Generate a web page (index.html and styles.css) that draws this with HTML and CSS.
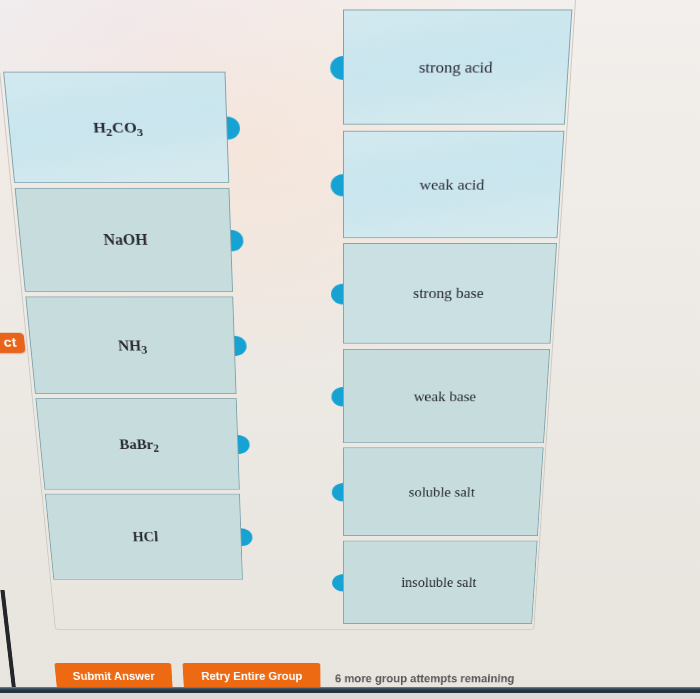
FILE: index.html
```html
<!DOCTYPE html>
<html lang="en">
<head>
    <meta charset="UTF-8">
    <meta name="viewport" content="width=device-width, initial-scale=1.0">
    <title>Classify the Compounds</title>
    <link rel="stylesheet" href="styles.css">
</head>
<body>
    <div class="screen">
        <div class="stage">
            <div class="side">
                <div class="tab">ct</div>
                <div class="edge"></div>
            </div>
            <div class="main">
                <div class="panel">
                    <div class="col items">
                        <div class="card item"><span class="label">H<sub>2</sub>CO<sub>3</sub></span></div>
                        <div class="card item"><span class="label">NaOH</span></div>
                        <div class="card item"><span class="label">NH<sub>3</sub></span></div>
                        <div class="card item"><span class="label">BaBr<sub>2</sub></span></div>
                        <div class="card item"><span class="label">HCl</span></div>
                    </div>
                    <div class="col targets">
                        <div class="card target"><span class="label">strong acid</span></div>
                        <div class="card target"><span class="label">weak acid</span></div>
                        <div class="card target"><span class="label">strong base</span></div>
                        <div class="card target"><span class="label">weak base</span></div>
                        <div class="card target"><span class="label">soluble salt</span></div>
                        <div class="card target"><span class="label">insoluble salt</span></div>
                    </div>
                </div>
                <div class="actions">
                    <button class="btn"><span class="label">Submit Answer</span></button>
                    <button class="btn btn-wide"><span class="label">Retry Entire Group</span></button>
                    <span class="attempts label">6 more group attempts remaining</span>
                </div>
            </div>
        </div>
    </div>
    <div class="bezel"></div>
    <div class="desk"></div>
</body>
</html>
```

FILE: styles.css
```css
html, body {
    margin: 0;
    padding: 0;
    overflow: hidden;
    background: #dcdcdc;
}
.screen {
    height: 687px;
    overflow: hidden;
    background:
        radial-gradient(ellipse 300px 220px at 250px 150px, rgba(255, 218, 196, 0.35), rgba(255, 218, 196, 0) 100%),
        radial-gradient(ellipse 260px 160px at 120px 20px, rgba(236, 228, 240, 0.45), rgba(236, 228, 240, 0) 100%),
        linear-gradient(180deg, #f3efec 0, #eeeae5 260px, #e8e4de 687px);
}

/* whole sheet is tilted away from the viewer */
.stage {
    display: flex;
    width: 720px;
    margin-left: -70px;
    transform-origin: 413px 0;
    transform: perspective(1152px) rotateX(-18.2deg);
    font-family: "Liberation Sans", Arial, sans-serif;
}
.side {
    width: 62px;
    flex-shrink: 0;
}
.tab {
    width: 60px;
    height: 26px;
    margin-top: 387px;
    box-sizing: border-box;
    padding-right: 9px;
    text-align: right;
    line-height: 26px;
    color: #fff;
    font-size: 16px;
    font-weight: bold;
    background: #e8641a;
    border-radius: 5px;
    box-shadow: 0 1px 2px rgba(120, 50, 10, 0.4);
}
.edge {
    width: 5px;
    height: 220px;
    margin: 334px 0 0 1px;
    background: #25262a;
}

.panel {
    display: grid;
    grid-template-columns: 227px 230px;
    column-gap: 120px;
    align-items: start;
    width: 584px;
    box-sizing: border-box;
    padding: 10px 2px 8px 3px;
    border: 1px solid #cdc8c2;
    border-top: none;
    border-radius: 0 0 4px 4px;
}
.col {
    display: flex;
    flex-direction: column;
}
.items {
    margin-top: 67px;
    gap: 6px;
}
.targets {
    gap: 6.5px;
}
.card {
    position: relative;
    height: 126px;
    box-sizing: border-box;
    display: flex;
    align-items: center;
    justify-content: center;
    border: 1px solid #7fa4ae;
    background: #c7dddd;
    color: #2a2a33;
    font-family: "Liberation Serif", "Times New Roman", serif;
    font-size: 17px;
}
.item {
    font-weight: bold;
}
.items .card:first-child,
.targets .card:nth-child(-n+2) {
    background: linear-gradient(170deg, #d3e9ef 0, #c9e5ee 45%, #d6eaee 100%);
}
.targets .card:nth-child(3) {
    background: #cae0e2;
}
.card sub {
    font-size: 13px;
    line-height: 0;
    vertical-align: -4px;
}

/* labels keep their height as the sheet recedes */
.label {
    display: inline-block;
    transform: scaleY(var(--sy, 1));
}
.items .card:nth-child(1) { --sy: 1.02; }
.items .card:nth-child(2) { --sy: 1.06; }
.items .card:nth-child(3) { --sy: 1.1; }
.items .card:nth-child(4) { --sy: 1.14; }
.items .card:nth-child(5) { --sy: 1.18; }
.targets .card:nth-child(2) { --sy: 1.04; }
.targets .card:nth-child(3) { --sy: 1.08; }
.targets .card:nth-child(4) { --sy: 1.12; }
.targets .card:nth-child(5) { --sy: 1.16; }
.targets .card:nth-child(6) { --sy: 1.2; }
.actions .label { --sy: 1.25; }

/* connector dots */
.card::after {
    content: "";
    position: absolute;
    top: 50%;
    width: 13px;
    height: 26px;
    margin-top: -13px;
    background: #17a2d4;
}
.item::after {
    right: -14px;
    border-radius: 0 13px 13px 0;
}
.target::after {
    left: -14px;
    border-radius: 13px 0 0 13px;
}

.actions {
    display: flex;
    align-items: flex-start;
    gap: 14px;
    margin: 53px 0 0 -5px;
}
.btn {
    width: 144px;
    height: 42px;
    padding: 0;
    border: none;
    border-radius: 3px;
    background: #ee6a12;
    color: #fff;
    font-family: "Liberation Sans", Arial, sans-serif;
    font-size: 14px;
    font-weight: bold;
}
.btn-wide {
    width: 170px;
}
.attempts {
    margin: 16px 0 0 4px;
    line-height: 18px;
    color: #585858;
    font-size: 14px;
    font-weight: bold;
}

.bezel {
    height: 6px;
    background: linear-gradient(180deg, #5b93b5 0, #3a5566 25%, #25303a 60%, #2c3640 100%);
}
.desk {
    height: 20px;
    background: #dadada;
}
```
